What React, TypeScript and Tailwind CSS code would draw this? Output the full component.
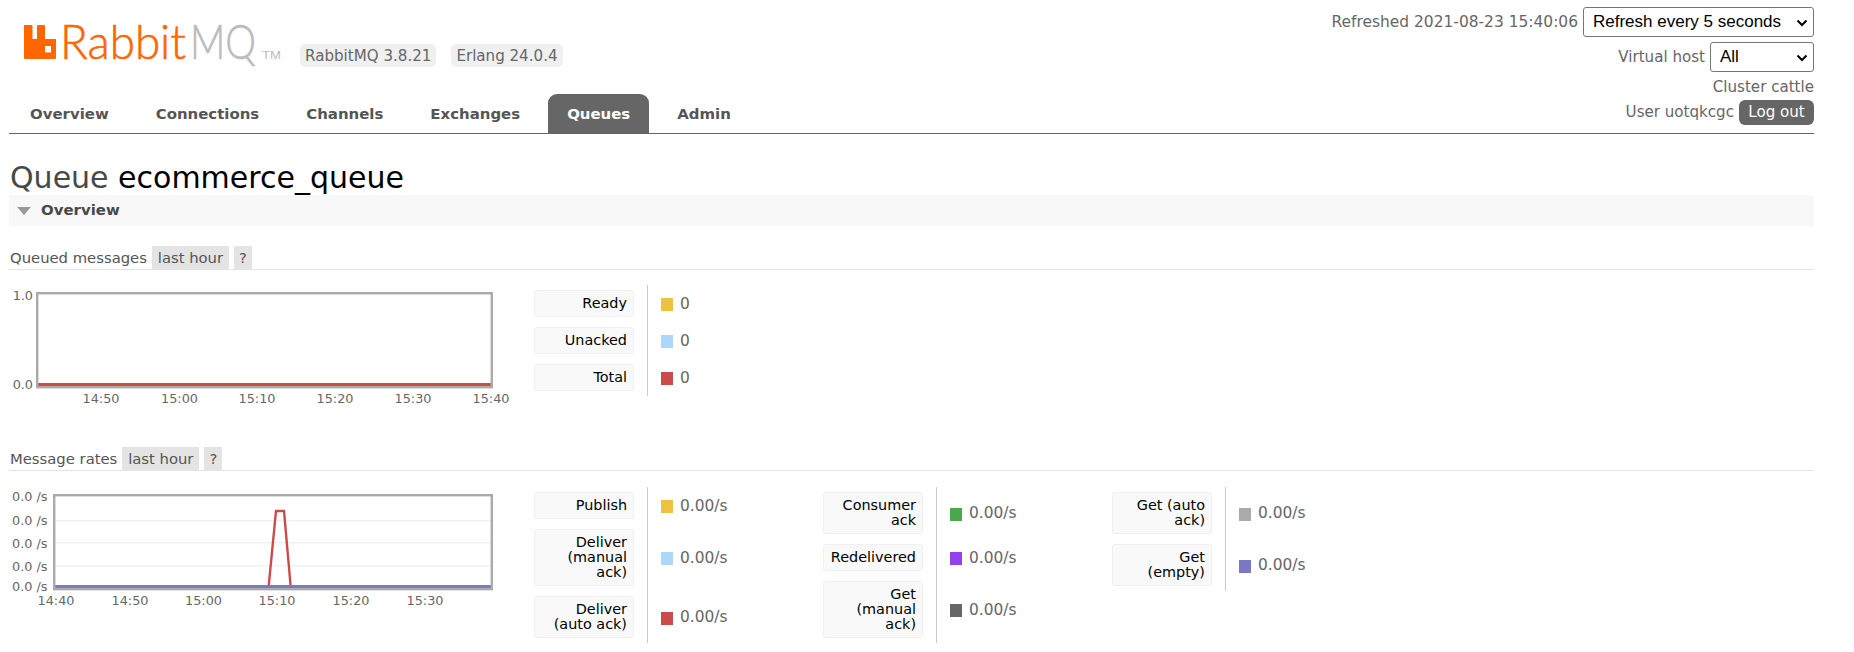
import React from "react";

const C = { y: "#edc240", b: "#afd8f8", r: "#cb4b4b", g: "#4da74d", p: "#9440ed", d: "#666666", a: "#aaaaaa", v: "#7c79c3" };

function Logo() {
  return (
    <svg width="270" height="64" viewBox="0 -16 270 64" className="block shrink-0">
      <path
        fillRule="evenodd"
        fill="#ff6600"
        d="M1 1h6.500a1 1 0 0 1 1 1v13h4.500V2a1 1 0 0 1 1-1h6a1 1 0 0 1 1 1v13h10a1 1 0 0 1 1 1v18a1 1 0 0 1-1 1H1a1 1 0 0 1-1-1V2a1 1 0 0 1 1-1zM21 22v6.500h6V22z"
      />
      <text x="36" y="35" fontFamily="Lato, 'Open Sans', sans-serif" fontWeight="300" fontSize="48" fill="#ff6600" stroke="#ff6600" strokeWidth="0.6" textLength="126" lengthAdjust="spacingAndGlyphs">Rabbit</text>
      <text x="166" y="35" fontFamily="Lato, 'Open Sans', sans-serif" fontWeight="300" fontSize="48" fill="#bbbbbb" stroke="#bbbbbb" strokeWidth="0.6" textLength="66" lengthAdjust="spacingAndGlyphs">MQ</text>
      <text x="238" y="35" fontFamily="'Liberation Sans', sans-serif" fontSize="11.500" fill="#bbbbbb" textLength="19" lengthAdjust="spacingAndGlyphs">TM</text>
    </svg>
  );
}

function Pill({ children }: { children: React.ReactNode }) {
  return <span className="h-[23px] px-[5px] rounded-[5px] bg-[#f0f0f0] text-[#666666] text-[15.1px] leading-[24px] whitespace-nowrap">{children}</span>;
}

function Tab({ label, active }: { label: string; active?: boolean }) {
  return (
    <div className={active ? "h-[39px] px-[19px] mr-[9px] rounded-t-[9px] bg-[#666666] text-white text-[14.95px] font-bold leading-[40px]" : "h-[39px] px-[19px] mr-[9px] text-[#555555] text-[14.95px] font-bold leading-[40px]"}>
      {label}
    </div>
  );
}

function FakeSelect({ label, width }: { label: string; width: string }) {
  return (
    <div className={width + " relative h-[30px]"}>
      <select className="w-full h-full appearance-none rounded-[3px] border border-[#767676] bg-white pl-[9px] pb-[1px] font-['Liberation_Sans',sans-serif] text-[17px] leading-[28px] text-black">
        <option>{label}</option>
      </select>
      <svg width="12" height="8" viewBox="0 0 12 8" className="absolute right-[6px] top-[12px] pointer-events-none">
        <path d="M1.500 1.500L6 6l4.500-4.500" fill="none" stroke="#000" strokeWidth="2" />
      </svg>
    </div>
  );
}

function Heading({ title }: { title: string }) {
  return (
    <div className="flex h-[24px] border-b border-[#e4e4e4] pl-[1px] text-[#555555] text-[14.8px] leading-[23px]">
      <span>{title}</span>
      <span className="ml-[5px] h-[23px] w-[77px] text-center bg-[#e4e4e4]">last hour</span>
      <span className="ml-[5px] h-[23px] w-[18px] text-center bg-[#e4e4e4]">?</span>
    </div>
  );
}

type Item = { label: React.ReactNode; color: string; value: string };

function LegendTable({ items, last }: { items: Item[]; last?: boolean }) {
  return (
    <div className={last ? "grid grid-cols-[100px_13px_176px] self-start" : "grid grid-cols-[100px_13px_176px]"}>
      {items.map((it, i) => (
        <React.Fragment key={i}>
          <div className="py-[5px]">
            <div className="rounded-[3px] border border-[#f0f0f0] bg-[#f9f9f9] py-[5px] pr-[6px] text-right text-[14.4px] leading-[15px] text-black">{it.label}</div>
          </div>
          <div />
          <div className="flex items-center border-l border-[#cccccc] pl-[13px] pt-[2px] text-[#666666] text-[15.4px]">
            <span className="w-[12px] h-[13px] mr-[7px] inline-block" style={{ backgroundColor: it.color }} />
            {it.value}
          </div>
        </React.Fragment>
      ))}
    </div>
  );
}

const tick = { fontFamily: "'DejaVu Sans', sans-serif", fontSize: 12.8, fill: "#666666" } as const;

function Chart1() {
  const xs: [string, number][] = [["14:50", 92], ["15:00", 170.5], ["15:10", 248], ["15:20", 326], ["15:30", 404], ["15:40", 482]];
  return (
    <svg width="525" height="125" viewBox="0 0 525 125" className="block shrink-0">
      <rect x="29" y="98" width="453" height="4" fill={C.r} />
      <rect x="28.200" y="8.200" width="454.600" height="94" fill="none" stroke="#aaaaaa" strokeWidth="2.400" />
      <text x="24" y="15" textAnchor="end" {...tick}>1.0</text>
      <text x="24" y="104" textAnchor="end" {...tick}>0.0</text>
      {xs.map(([t, x]) => (
        <text key={t} x={x} y="118" textAnchor="middle" {...tick}>{t}</text>
      ))}
    </svg>
  );
}

function Chart2() {
  const xs: [string, number][] = [["14:40", 47], ["14:50", 121], ["15:00", 194.5], ["15:10", 268], ["15:20", 342], ["15:30", 416]];
  const ys: [number, number][] = [[0, 14], [1, 38], [2, 61], [3, 84], [4, 104]];
  return (
    <svg width="525" height="135" viewBox="0 0 525 135" className="block shrink-0">
      {[33, 55, 78].map((y) => (
        <rect key={y} x="45" y={y} width="438" height="1.500" fill="#f1f1f1" />
      ))}
      <path d="M259.600 100L267 24h8l6.700 76" fill="none" stroke={C.r} strokeWidth="2.400" />
      <rect x="45" y="98" width="438" height="4" fill={C.v} />
      <rect x="45.200" y="8.200" width="437.600" height="94" fill="none" stroke="#aaaaaa" strokeWidth="2.400" />
      {ys.map(([i, y]) => (
        <text key={i} x="3" y={y} {...tick}>0.0 /s</text>
      ))}
      {xs.map(([t, x]) => (
        <text key={t} x={x} y="118" textAnchor="middle" {...tick}>{t}</text>
      ))}
    </svg>
  );
}

export default function App() {
  return (
    <div className="w-[1854px] h-[652px] overflow-hidden bg-white font-['DejaVu_Sans',sans-serif]">
      <div className="ml-[9px] w-[1805px]">
        <header className="flex justify-between h-[134px] border-b border-[#666666]">
          <div className="flex flex-col">
            <div className="flex h-[94px]">
              <div className="ml-[15px] mt-[8px]">
                <Logo />
              </div>
              <div className="ml-[6px] mt-[44px] flex gap-[15px]">
                <Pill>RabbitMQ 3.8.21</Pill>
                <Pill>Erlang 24.0.4</Pill>
              </div>
            </div>
            <nav className="flex pl-[2px]">
              <Tab label="Overview" />
              <Tab label="Connections" />
              <Tab label="Channels" />
              <Tab label="Exchanges" />
              <Tab label="Queues" active />
              <Tab label="Admin" />
            </nav>
          </div>
          <div className="flex flex-col items-end pt-[7px] text-[#666666] text-[15.1px]">
            <div className="flex items-center h-[30px] gap-[5px]">
              <span className="text-[15.45px] mt-[1px]">Refreshed 2021-08-23 15:40:06</span>
              <FakeSelect label="Refresh every 5 seconds" width="w-[231px]" />
            </div>
            <div className="flex items-center h-[30px] gap-[5px] mt-[5px]">
              <span>Virtual host</span>
              <FakeSelect label="All" width="w-[104px]" />
            </div>
            <div className="h-[24px] leading-[24px] mt-[3px]">Cluster cattle</div>
            <div className="flex items-center h-[25px] gap-[5px] mt-[1px]">
              <span>User uotqkcgc</span>
              <span className="h-[25px] w-[75px] text-center rounded-[6px] bg-[#666666] text-white leading-[25px]">Log out</span>
            </div>
          </div>
        </header>

        <h1 className="h-[61px] pt-[27px] pl-[1px] text-[30px] leading-[34px] font-normal text-[#484848]">
          Queue <span className="text-black">ecommerce_queue</span>
        </h1>

        <div className="flex items-center h-[31px] bg-[#f8f8f8] pl-[8px] text-[#484848] text-[14.95px] font-bold">
          <svg width="14" height="8" viewBox="0 0 14 8" className="mr-[10px]">
            <polygon points="0,0 14,0 7,8" fill="#999999" />
          </svg>
          Overview
        </div>

        <section className="mt-[20px]">
          <Heading title="Queued messages" />
          <div className="flex items-start pt-[15px]">
            <Chart1 />
            <LegendTable
              items={[
                { label: "Ready", color: C.y, value: "0" },
                { label: "Unacked", color: C.b, value: "0" },
                { label: "Total", color: C.r, value: "0" },
              ]}
            />
          </div>
        </section>

        <section className="mt-[37px]">
          <Heading title="Message rates" />
          <div className="flex items-start pt-[16px]">
            <Chart2 />
            <LegendTable
              items={[
                { label: "Publish", color: C.y, value: "0.00/s" },
                { label: <>Deliver<br />(manual<br />ack)</>, color: C.b, value: "0.00/s" },
                { label: <>Deliver<br />(auto ack)</>, color: C.r, value: "0.00/s" },
              ]}
            />
            <LegendTable
              items={[
                { label: <>Consumer<br />ack</>, color: C.g, value: "0.00/s" },
                { label: "Redelivered", color: C.p, value: "0.00/s" },
                { label: <>Get<br />(manual<br />ack)</>, color: C.d, value: "0.00/s" },
              ]}
            />
            <LegendTable
              last
              items={[
                { label: <>Get (auto<br />ack)</>, color: C.a, value: "0.00/s" },
                { label: <>Get<br />(empty)</>, color: C.v, value: "0.00/s" },
              ]}
            />
          </div>
        </section>
      </div>
    </div>
  );
}
